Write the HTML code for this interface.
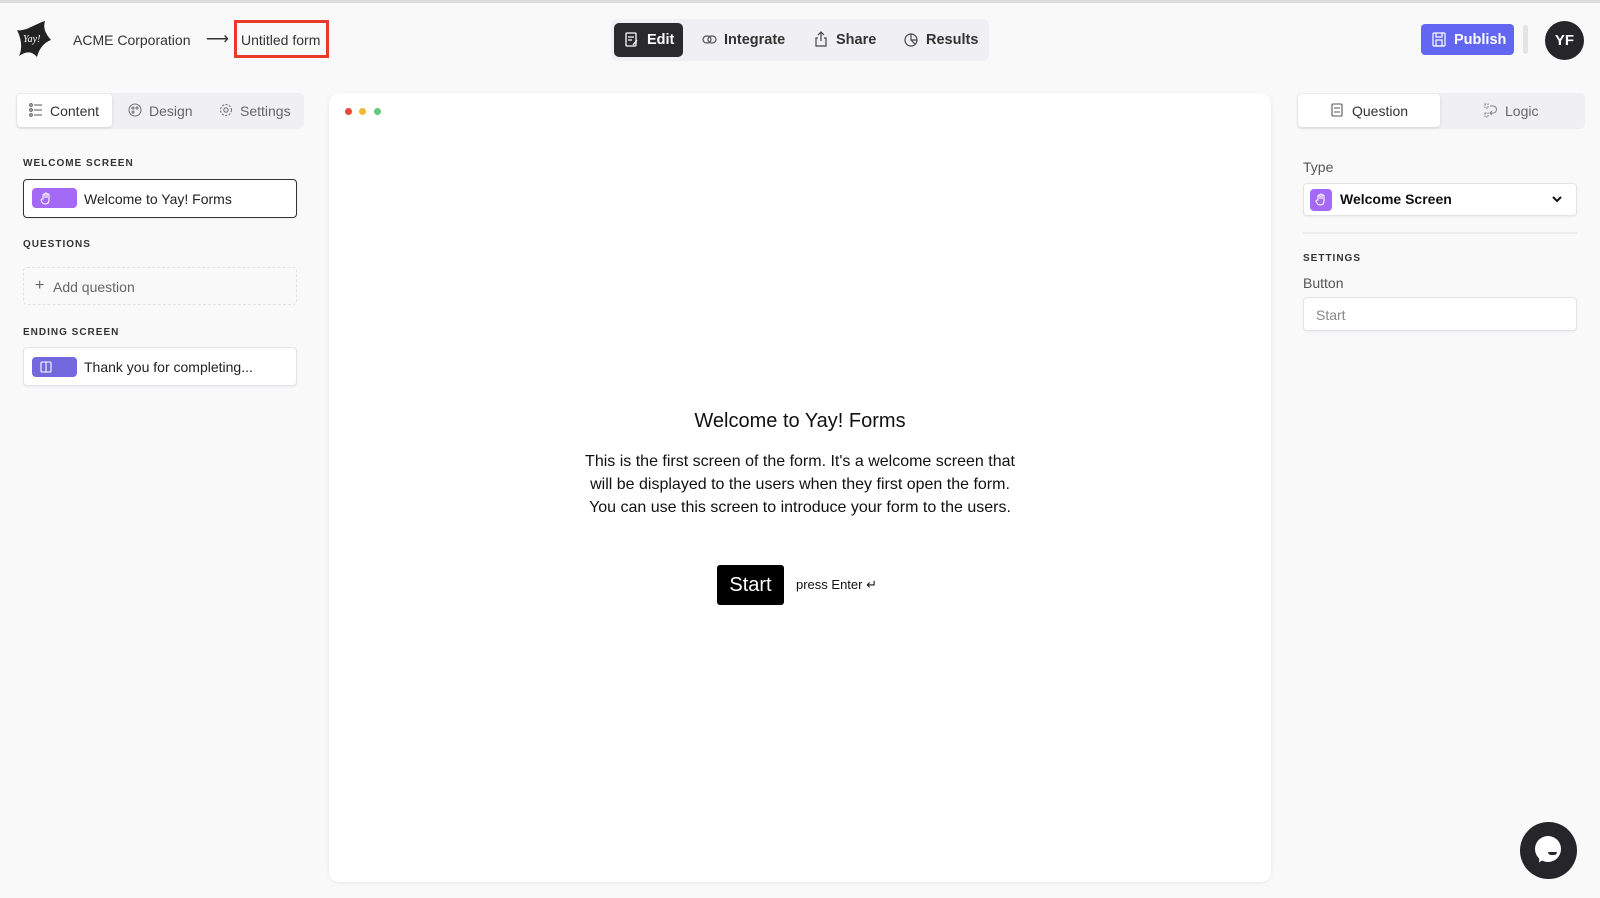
<!DOCTYPE html>
<html><head><meta charset="utf-8"><style>
*{box-sizing:border-box;margin:0;padding:0}
body{width:1600px;height:898px;background:#f9f9fa;font-family:"Liberation Sans",sans-serif;position:relative;overflow:hidden;color:#222}
.a{position:absolute}
.lbl{font-size:10px;font-weight:bold;letter-spacing:1px;color:#333}
.card{background:#fff;border:1px solid #e4e4e7;border-radius:4px;box-shadow:0 1px 2px rgba(0,0,0,.06)}
.ic{position:absolute;left:8px;top:9px;width:45px;height:20px;border-radius:4px}
.tt{font-size:14px;color:#222}
</style></head><body>
<div class="a" style="left:0;top:0;width:1600px;height:3px;background:#ddd"></div>
<svg class="a" style="left:15px;top:20px" width="38" height="38" viewBox="0 0 38 38"><path d="M2 10 C10 12 20 4 30 1 C28 8 30 13 36 20 C30 22 24 28 22 37 C16 30 10 32 4 36 C8 28 6 18 2 10Z" fill="#222"/><text x="8" y="22" font-size="10" fill="#fff" font-style="italic" font-family="Liberation Serif">Yay!</text></svg>
<div class="a" style="left:73px;top:32px;font-size:14px;color:#333">ACME Corporation</div>
<div class="a" style="left:206px;top:29px;font-size:16px;color:#333">⟶</div>
<div class="a" style="left:234px;top:20px;width:95px;height:38px;border:3px solid #e8392b"></div>
<div class="a" style="left:241px;top:32px;font-size:14px;color:#333">Untitled form</div>

<div class="a" style="left:611px;top:19px;width:378px;height:42px;background:#f0f0f4;border-radius:6px"></div>
<div class="a" style="left:614px;top:23px;width:69px;height:34px;background:#2a2a2c;border-radius:5px"></div>
<svg class="a" style="left:625px;top:32px" width="14" height="16" viewBox="0 0 14 16" fill="none" stroke="#fff" stroke-width="1.3"><rect x="1" y="1" width="10" height="13" rx="1"/><path d="M3 5h6M3 8h4M8 13l4-5"/></svg>
<div class="a" style="left:647px;top:32px;font-size:14.5px;font-weight:bold;color:#fff">Edit</div>
<svg class="a" style="left:702px;top:35px" width="15" height="9" viewBox="0 0 15 9" fill="none" stroke="#555" stroke-width="1.2"><rect x="1" y="1" width="8" height="7" rx="3.5"/><rect x="6" y="1" width="8" height="7" rx="3.5"/></svg>
<div class="a" style="left:724px;top:32px;font-size:14.5px;font-weight:bold;color:#333">Integrate</div>
<svg class="a" style="left:815px;top:31px" width="12" height="16" viewBox="0 0 12 16" fill="none" stroke="#444" stroke-width="1.2"><path d="M6 1v9M3 4l3-3 3 3M3 7H1v8h10V7H9"/></svg>
<div class="a" style="left:836px;top:32px;font-size:14.5px;font-weight:bold;color:#333">Share</div>
<svg class="a" style="left:904px;top:32px" width="15" height="15" viewBox="0 0 15 15" fill="none" stroke="#444" stroke-width="1.2"><circle cx="7" cy="8" r="6"/><path d="M7 2v6h6M7 8l4 4"/></svg>
<div class="a" style="left:926px;top:32px;font-size:14.5px;font-weight:bold;color:#333">Results</div>

<div class="a" style="left:1421px;top:24px;width:93px;height:31px;background:#6366f1;border-radius:4px"></div>
<svg class="a" style="left:1432px;top:32px" width="14" height="15" viewBox="0 0 14 15" fill="none" stroke="#fff" stroke-width="1.2"><rect x="1" y="1" width="12" height="13" rx="1"/><rect x="4" y="8" width="6" height="6"/><path d="M4 1v4h6V1"/></svg>
<div class="a" style="left:1454px;top:32px;font-size:14.5px;font-weight:bold;color:#fff">Publish</div>
<div class="a" style="left:1523px;top:25px;width:5px;height:29px;background:#e4e4e7;border-radius:3px"></div>
<div class="a" style="left:1545px;top:21px;width:39px;height:39px;border-radius:50%;background:#26262a;color:#fff;font-weight:bold;font-size:15px;text-align:center;line-height:39px">YF</div>

<!-- left panel -->
<div class="a" style="left:16px;top:93px;width:288px;height:36px;background:#f0f0f4;border-radius:5px"></div>
<div class="a" style="left:17px;top:94px;width:95px;height:33px;background:#fff;border-radius:4px;box-shadow:0 1px 3px rgba(0,0,0,.12)"></div>
<svg class="a" style="left:29px;top:103px" width="13" height="14" viewBox="0 0 13 14" fill="none" stroke="#555" stroke-width="1.1"><circle cx="2" cy="2" r="1.3"/><circle cx="2" cy="7" r="1.3"/><circle cx="2" cy="12" r="1.3"/><path d="M5 2h8M5 7h8M5 12h8"/></svg>
<div class="a" style="left:50px;top:103px;font-size:14px;color:#333">Content</div>
<svg class="a" style="left:128px;top:103px" width="14" height="14" viewBox="0 0 14 14" fill="none" stroke="#777" stroke-width="1.1"><circle cx="7" cy="7" r="6"/><circle cx="5" cy="5" r="1"/><circle cx="9" cy="5" r="1"/><circle cx="5" cy="9" r="1"/></svg>
<div class="a" style="left:149px;top:103px;font-size:14px;color:#666">Design</div>
<svg class="a" style="left:219px;top:103px" width="14" height="14" viewBox="0 0 14 14" fill="none" stroke="#777" stroke-width="1.1"><circle cx="7" cy="7" r="2.2"/><circle cx="7" cy="7" r="5.5" stroke-dasharray="2.2 1.4"/></svg>
<div class="a" style="left:240px;top:103px;font-size:14px;color:#666">Settings</div>

<div class="a lbl" style="left:23px;top:158px">WELCOME SCREEN</div>
<div class="a card" style="left:23px;top:179px;width:274px;height:39px;border:1.5px solid #333"><div class="ic" style="background:#a56af5;top:8px"></div><svg class="a" style="left:16px;top:12px" width="12" height="13" viewBox="0 0 12 13" fill="none" stroke="#fff" stroke-width="1.1"><path d="M3 7V3a1 1 0 012 0v3V2a1 1 0 012 0v4V3a1 1 0 012 0v5c0 3-2 4-4 4S2 11 1 8l1-1z"/></svg><span class="a tt" style="left:60px;top:11px">Welcome to Yay! Forms</span></div>
<div class="a lbl" style="left:23px;top:239px">QUESTIONS</div>
<div class="a" style="left:23px;top:267px;width:274px;height:38px;border:1.5px dashed #e2e2e6;border-radius:4px"></div>
<div class="a" style="left:35px;top:277px;font-size:16px;color:#666">+</div>
<div class="a" style="left:53px;top:279px;font-size:14px;color:#666">Add question</div>
<div class="a lbl" style="left:23px;top:327px">ENDING SCREEN</div>
<div class="a card" style="left:23px;top:347px;width:274px;height:39px"><div class="ic" style="background:#7368de"></div><svg class="a" style="left:16px;top:13px" width="12" height="12" viewBox="0 0 12 12" fill="none" stroke="#fff" stroke-width="1.1"><rect x="1" y="1" width="10" height="10" rx="1"/><path d="M6 1v10"/></svg><span class="a tt" style="left:60px;top:11px">Thank you for completing...</span></div>

<!-- canvas -->
<div class="a" style="left:329px;top:93px;width:942px;height:789px;background:#fff;border-radius:10px;box-shadow:0 1px 4px rgba(0,0,0,.08)"></div>
<div class="a" style="left:345px;top:108px;width:7px;height:7px;border-radius:50%;background:#e8483a"></div>
<div class="a" style="left:359px;top:108px;width:7px;height:7px;border-radius:50%;background:#f2b834"></div>
<div class="a" style="left:374px;top:108px;width:7px;height:7px;border-radius:50%;background:#63c97e"></div>
<div class="a" style="left:400px;top:410px;width:800px;text-align:center;font-size:20px;color:#111">Welcome to Yay! Forms</div>
<div class="a" style="left:450px;top:450px;width:700px;text-align:center;font-size:16px;line-height:23px;color:#111">This is the first screen of the form. It's a welcome screen that<br>will be displayed to the users when they first open the form.<br>You can use this screen to introduce your form to the users.</div>
<div class="a" style="left:717px;top:565px;width:67px;height:40px;background:#000;border-radius:3px;color:#fff;font-size:20px;text-align:center;line-height:40px">Start</div>
<div class="a" style="left:796px;top:577px;font-size:13px;color:#111">press Enter ↵</div>

<!-- right panel -->
<div class="a" style="left:1297px;top:93px;width:288px;height:36px;background:#f0f0f4;border-radius:5px"></div>
<div class="a" style="left:1298px;top:94px;width:142px;height:33px;background:#fff;border-radius:4px;box-shadow:0 1px 3px rgba(0,0,0,.12)"></div>
<svg class="a" style="left:1331px;top:103px" width="12" height="14" viewBox="0 0 12 14" fill="none" stroke="#555" stroke-width="1.1"><rect x="1" y="1" width="10" height="12" rx="1"/><path d="M3 5h6M3 9h6"/></svg>
<div class="a" style="left:1352px;top:103px;font-size:14px;color:#333">Question</div>
<svg class="a" style="left:1484px;top:103px" width="14" height="15" viewBox="0 0 14 15" fill="none" stroke="#888" stroke-width="1.1"><rect x="1" y="1" width="3" height="4" stroke-dasharray="1.5 1"/><rect x="1" y="10" width="3" height="4" stroke-dasharray="1.5 1"/><path d="M6 3h3a3 3 0 010 7H6M8 8l-2 2 2 2"/></svg>
<div class="a" style="left:1505px;top:103px;font-size:14px;color:#666">Logic</div>
<div class="a" style="left:1303px;top:159px;font-size:14px;color:#555">Type</div>
<div class="a card" style="left:1303px;top:183px;width:274px;height:33px"></div>
<div class="a" style="left:1310px;top:189px;width:22px;height:22px;border-radius:4px;background:#a56af5"></div>
<svg class="a" style="left:1315px;top:193px" width="12" height="13" viewBox="0 0 12 13" fill="none" stroke="#fff" stroke-width="1.1"><path d="M3 7V3a1 1 0 012 0v3V2a1 1 0 012 0v4V3a1 1 0 012 0v5c0 3-2 4-4 4S2 11 1 8l1-1z"/></svg>
<div class="a" style="left:1340px;top:191px;font-size:14px;font-weight:bold;color:#111">Welcome Screen</div>
<svg class="a" style="left:1552px;top:196px" width="10" height="7" viewBox="0 0 10 7" fill="none" stroke="#111" stroke-width="2"><path d="M1 1l4 4 4-4"/></svg>
<div class="a" style="left:1303px;top:232px;width:274px;height:2px;background:#ececef"></div>
<div class="a lbl" style="left:1303px;top:253px">SETTINGS</div>
<div class="a" style="left:1303px;top:275px;font-size:14px;color:#555">Button</div>
<div class="a card" style="left:1303px;top:297px;width:274px;height:34px"></div>
<div class="a" style="left:1316px;top:307px;font-size:14px;color:#888">Start</div>

<div class="a" style="left:1520px;top:822px;width:57px;height:57px;border-radius:50%;background:#26262a"></div>
<div class="a" style="left:1535px;top:836px;width:26px;height:26px;border-radius:50%;background:#fff"></div>
<div class="a" style="left:1537px;top:855px;width:0;height:0;border-left:4px solid transparent;border-right:4px solid transparent;border-top:8px solid #fff;transform:rotate(30deg)"></div>
<div class="a" style="left:1548px;top:852px;width:9px;height:3px;background:#26262a;border-radius:0 0 4px 4px"></div>
</body></html>
